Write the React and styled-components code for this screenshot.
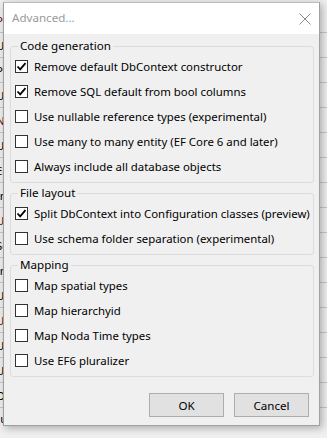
import React from "react";
import styled, { createGlobalStyle } from "styled-components";

const Global = createGlobalStyle`
  html, body { margin: 0; padding: 0; }
  body {
    width: 327px; height: 438px; overflow: hidden;
    background: #f0f0f0;
    font-family: "Noto Sans", "Segoe UI", sans-serif;
    font-size: 11.4px;
    color: #000;
  }
`;

const Page = styled.div`
  position: relative;
  width: 327px;
  height: 438px;
  overflow: hidden;
  background: #f0f0f0;
`;

const BackList = styled.div`
  display: flex;
  flex-direction: column;
  padding-top: 8px;
`;

const BackRow = styled.div`
  height: 24px;
  border-bottom: 1px solid #c8c8c8;
  display: flex;
  align-items: center;
  margin-left: ${(p) => p.$shift || 0}px;
  color: ${(p) => p.$color || "#000"};
  white-space: nowrap;
`;

const BottomText = styled.div`
  margin-left: -19px;
  height: 20px;
  display: flex;
  align-items: center;
  white-space: nowrap;
`;

const Dialog = styled.div`
  position: absolute;
  left: 3px;
  top: 2px;
  width: 317px;
  height: 424px;
  background: #f0f0f0;
  border: 1px solid #a0a0a0;
  border-top-color: #bdbdbd;
  box-sizing: border-box;
  box-shadow: 2px 2px 8px rgba(0, 0, 0, 0.3);
  display: flex;
  flex-direction: column;
`;

const TitleBar = styled.div`
  height: 31px;
  background: #fff;
  display: flex;
  align-items: center;
  justify-content: space-between;
  padding: 0 8px 0 8px;
  flex: none;
`;

const Title = styled.span`
  color: #9a9a9a;
  font-size: 11.6px;
  margin-top: -2px;
`;

const Body = styled.div`
  flex: 1;
  display: flex;
  flex-direction: column;
  padding: 4px 5px 0 6px;
`;

const Group = styled.fieldset`
  margin: 0 0 2px 0;
  padding: 0 4px 3px 4px;
  border: 1px solid #dcdcdc;
  border-radius: 3px;
  display: flex;
  flex-direction: column;
  min-width: 0;
`;

const Legend = styled.legend`
  padding: 0 2px;
  margin-left: 3px;
  height: 16px;
  line-height: 16px;
  font-size: 11.6px;
`;

const Row = styled.label`
  height: 25px;
  flex: none;
  display: flex;
  align-items: center;
  gap: 6px;
  white-space: nowrap;
`;

const Box = styled.span`
  width: 13px;
  height: 13px;
  box-sizing: border-box;
  border: 1px solid #333;
  background: #fff;
  flex: none;
  display: flex;
  align-items: center;
  justify-content: center;
`;

const Footer = styled.div`
  margin-top: auto;
  display: flex;
  justify-content: flex-end;
  gap: 10px;
  padding: 0 5px 8px 0;
`;

const Button = styled.button`
  width: 75px;
  height: 24px;
  background: #e1e1e1;
  border: 1px solid #adadad;
  font-family: inherit;
  font-size: 11.6px;
  color: #000;
  padding: 0;
`;

const Check = () => (
  <svg width="11" height="11" viewBox="0 0 11 11">
    <path d="M1.5 5.5 L4.2 8.3 L9.5 2.2" fill="none" stroke="#000" strokeWidth="1.8" />
  </svg>
);

const Option = ({ checked, children }) => (
  <Row>
    <Box>{checked && <Check />}</Box>
    <span>{children}</span>
  </Row>
);

const CloseIcon = () => (
  <svg width="12" height="12" viewBox="0 0 12 12">
    <path d="M0.5 0.5 L11.5 11.5 M11.5 0.5 L0.5 11.5" stroke="#8a8a8a" strokeWidth="1" />
  </svg>
);

const backRows = [
  "Project",
  "Use",
  "Pluralize",
  "Use DataAnnotations",
  "Namespace",
  "Use DbContext",
  "Entity",
  "Include",
  "Use database names",
  "Schema",
  "Include",
  "Use table",
  "Use nullable",
  "Use hierarchy",
  "Use spatial",
  "Output",
];

export default function App() {
  return (
    <Page>
      <Global />
      <BackList>
        {backRows.map((t, i) => (
          <BackRow key={i} $shift={-4} $color={i % 4 === 0 ? "#5a1010" : "#000"}>
            {t}
          </BackRow>
        ))}
        <BottomText>Include connection string in generated code</BottomText>
      </BackList>
      <Dialog>
        <TitleBar>
          <Title>Advanced...</Title>
          <CloseIcon />
        </TitleBar>
        <Body>
          <Group>
            <Legend>Code generation</Legend>
            <Option checked>Remove default DbContext constructor</Option>
            <Option checked>Remove SQL default from bool columns</Option>
            <Option>Use nullable reference types (experimental)</Option>
            <Option>Use many to many entity (EF Core 6 and later)</Option>
            <Option>Always include all database objects</Option>
          </Group>
          <Group>
            <Legend>File layout</Legend>
            <Option checked>Split DbContext into Configuration classes (preview)</Option>
            <Option>Use schema folder separation (experimental)</Option>
          </Group>
          <Group>
            <Legend>Mapping</Legend>
            <Option>Map spatial types</Option>
            <Option>Map hierarchyid</Option>
            <Option>Map Noda Time types</Option>
            <Option>Use EF6 pluralizer</Option>
          </Group>
          <Footer>
            <Button>OK</Button>
            <Button>Cancel</Button>
          </Footer>
        </Body>
      </Dialog>
    </Page>
  );
}
